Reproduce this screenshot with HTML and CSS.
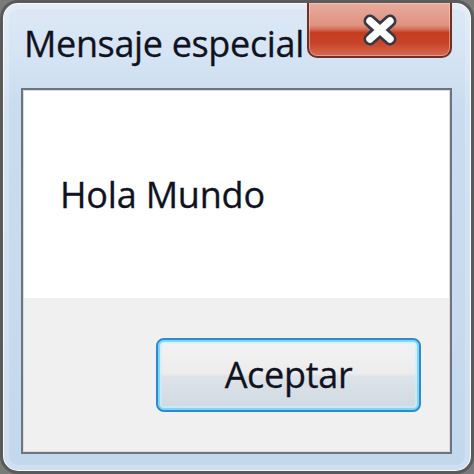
FILE: index.html
```html
<!DOCTYPE html>
<html lang="es">
<head>
<meta charset="utf-8">
<title>Mensaje especial</title>
<link rel="stylesheet" href="styles.css">
</head>
<body>
<div class="window">
  <div class="titlebar">
    <span class="title">Mensaje especial</span>
    <button class="close" aria-label="Cerrar">
      <svg class="close-icon" width="40" height="38" viewBox="-20 -19 40 38">
        <path d="M-10 -9 L10 9 M10 -9 L-10 9" stroke="#353847" stroke-width="13" stroke-linecap="round" fill="none"/>
        <path d="M-10 -9 L10 9 M10 -9 L-10 9" stroke="#ffffff" stroke-width="7.5" stroke-linecap="round" fill="none"/>
      </svg>
    </button>
  </div>
  <div class="client">
    <div class="message"><p class="text">Hola Mundo</p></div>
    <div class="actions"><button class="btn">Aceptar</button></div>
  </div>
</div>
</body>
</html>
```
FILE: styles.css
```css
html, body {
  margin: 0;
  padding: 0;
}
body {
  width: 474px;
  height: 474px;
  background: #7a7a7a;
  font-family: "Open Sans", "Noto Sans", sans-serif;
}
.window {
  box-sizing: border-box;
  width: 474px;
  height: 474px;
  border: 3px solid #5a5a5a;
  border-radius: 18px;
  padding: 0 19px 17px 18px;
  display: flex;
  flex-direction: column;
  background: linear-gradient(to bottom, #dde8f5 0px, #d4e3f3 60px, #cadcef 100px, #c4d8ed 100%);
  box-shadow: inset 0 0 0 1px rgba(255,255,255,0.85), inset 0 0 0 6px rgba(255,255,255,0.2);
}
.titlebar {
  height: 85px;
  display: flex;
  justify-content: space-between;
  align-items: flex-start;
}
.title {
  margin-top: 23px;
  padding-left: 3px;
  font-size: 36px;
  line-height: 36px;
  color: #10131f;
  letter-spacing: -0.35px;
  white-space: nowrap;
  -webkit-text-stroke: 0.3px #10131f;
}
.close {
  box-sizing: border-box;
  width: 145px;
  height: 55px;
  margin: 0;
  padding: 0;
  border: 2px solid #6e3128;
  border-top: none;
  border-radius: 0 0 10px 10px;
  background: linear-gradient(to bottom, #e9ab9d 0%, #df9380 42%, #d26c55 50%, #c63b20 56%, #c84429 76%, #d46b51 100%);
  box-shadow: inset 0 0 0 1px rgba(255,220,210,0.45);
  display: flex;
  align-items: center;
  justify-content: center;
}
.close-icon {
  display: block;
}
.client {
  flex: 1;
  display: flex;
  flex-direction: column;
  border: 2px solid #6c7480;
  background: #ffffff;
  box-shadow: inset 0 0 0 1px #dcdcdc;
}
.message {
  height: 208px;
  box-sizing: border-box;
  padding: 87px 0 0 37px;
}
.text {
  margin: 0;
  font-size: 36px;
  line-height: 36px;
  color: #10131f;
  letter-spacing: -0.2px;
  -webkit-text-stroke: 0.3px #10131f;
}
.actions {
  flex: 1;
  background: #f0f0f0;
  display: flex;
  justify-content: flex-end;
  align-items: flex-start;
  padding: 40px 28px 0 0;
  margin: 0 1px 1px 1px;
}
.btn {
  box-sizing: border-box;
  width: 265px;
  height: 74px;
  margin: 0;
  padding: 0;
  border: 2px solid #2b8ad0;
  border-radius: 8px;
  background: linear-gradient(to bottom, #f3f3f3 0%, #ececec 48%, #dde3e9 52%, #cfd9e2 100%);
  box-shadow: inset 0 0 0 2px #7fd6f6, inset 0 0 0 4px rgba(200,240,252,0.6);
  font-family: "Open Sans", "Noto Sans", sans-serif;
  font-size: 36px;
  line-height: 36px;
  color: #10131f;
  letter-spacing: -0.3px;
  -webkit-text-stroke: 0.3px #10131f;
}
```
